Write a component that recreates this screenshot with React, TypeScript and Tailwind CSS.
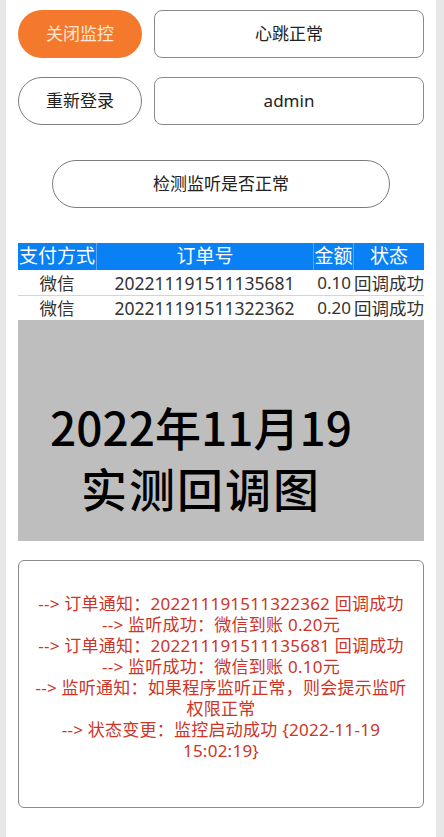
import React from 'react';

const FONT = { fontFamily: '"Noto Sans", "Noto Sans CJK SC", sans-serif' };

const orders = [
  { way: '微信', no: '202211191511135681', amount: '0.10', status: '回调成功' },
  { way: '微信', no: '202211191511322362', amount: '0.20', status: '回调成功' },
];

const logs = [
  '--> 订单通知：202211191511322362 回调成功',
  '--> 监听成功：微信到账 0.20元',
  '--> 订单通知：202211191511135681 回调成功',
  '--> 监听成功：微信到账 0.10元',
  '--> 监听通知：如果程序监听正常，则会提示监听权限正常',
  '--> 状态变更：监控启动成功 {2022-11-19 15:02:19}',
];

export default function App() {
  return (
    <div className="min-h-screen bg-[#e7e7e7] pl-[6px] pr-[8px]" style={FONT}>
      <div className="min-h-screen bg-white px-3 pt-[10px] pb-[29px]">
        {/* Top buttons */}
        <div className="flex gap-3">
          <button className="h-12 w-[124px] rounded-[24px] bg-[#f5792c] text-[17px] text-[#fde6d6]">
            关闭监控
          </button>
          <div className="flex h-12 flex-1 items-center justify-center rounded-lg border border-[#8a8a8a] text-[17px] text-[#222]">
            心跳正常
          </div>
        </div>
        <div className="mt-[19px] flex gap-3">
          <button className="h-12 w-[124px] rounded-[24px] border border-[#7d7d7d] bg-white text-[17px] text-[#222]">
            重新登录
          </button>
          <div className="flex h-12 flex-1 items-center justify-center rounded-lg border border-[#8a8a8a] text-[17px] text-[#222]">
            admin
          </div>
        </div>
        <div className="mt-[35px] flex justify-center">
          <button className="h-12 w-[338px] rounded-[24px] border border-[#7d7d7d] bg-white text-[17px] text-[#222]">
            检测监听是否正常
          </button>
        </div>

        {/* Order table */}
        <div className="mt-[35px]">
          <div className="grid h-[27px] grid-cols-[78px_217px_40px_1fr] bg-[#0a80f5] text-[19px] leading-[27px] text-white">
            <div className="text-center">支付方式</div>
            <div className="border-l border-[#5aa8f5] text-center">订单号</div>
            <div className="border-l border-[#5aa8f5] text-center">金额</div>
            <div className="border-l border-[#5aa8f5] text-center">状态</div>
          </div>
          {orders.map((o, i) => (
            <div
              key={o.no}
              className={`grid grid-cols-[78px_217px_40px_1fr] text-[17.5px] text-[#333] ${
                i === 0 ? 'h-[26px] border-b border-[#d5d5d5] leading-[26px]' : 'h-[24px] leading-[24px]'
              }`}
            >
              <div className="text-center">{o.way}</div>
              <div className="text-center">{o.no}</div>
              <div className="pr-[2px] text-right text-[17px]">{o.amount}</div>
              <div className="whitespace-nowrap text-right">{o.status}</div>
            </div>
          ))}
        </div>

        {/* Screenshot placeholder */}
        <div className="flex h-[221px] flex-col items-center justify-start bg-[#bfbebf] pt-[76px] pr-[40px]">
          <div className="text-[46px] font-medium leading-[61px] text-black" style={{ fontFamily: '"Noto Sans CJK SC", sans-serif' }}>
            2022年11月19
          </div>
          <div className="text-[46px] font-medium leading-[61px] tracking-[2px] text-black" style={{ fontFamily: '"Noto Sans CJK SC", sans-serif' }}>
            实测回调图
          </div>
        </div>

        {/* Log box */}
        <div className="mt-[19px] h-[248px] rounded-md border border-[#8a8a8a] px-[14px] pt-[32px]">
          {logs.map((l) => (
            <p key={l} className="text-center text-[17px] leading-[21px] tracking-[0.25px] text-[#cc3528]">
              {l}
            </p>
          ))}
        </div>
      </div>
    </div>
  );
}
